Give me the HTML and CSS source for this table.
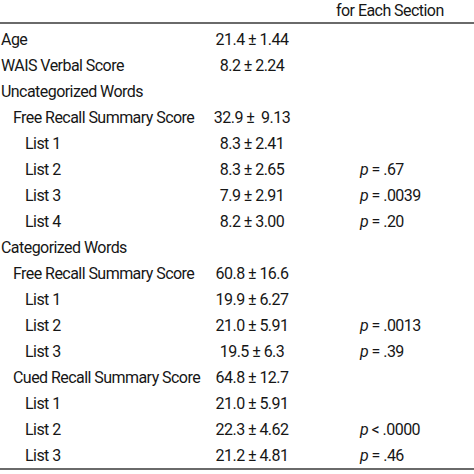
FILE: index.html
```html
<!DOCTYPE html>
<html>
<head>
<meta charset="utf-8">
<link rel="stylesheet" href="styles.css">
</head>
<body>
<div class="table">
  <div class="head">
    <span class="c-label"></span>
    <span class="c-val"></span>
    <span class="head-p">for Each Section</span>
  </div>
  <div class="body">
    <div class="row"><span class="c-label">Age</span><span class="c-val">21.4 ± 1.44</span><span class="c-p"></span></div>
    <div class="row"><span class="c-label">WAIS Verbal Score</span><span class="c-val">8.2 ± 2.24</span><span class="c-p"></span></div>
    <div class="row"><span class="c-label">Uncategorized Words</span><span class="c-val"></span><span class="c-p"></span></div>
    <div class="row"><span class="c-label l1">Free Recall Summary Score</span><span class="c-val">32.9 ±&nbsp; 9.13</span><span class="c-p"></span></div>
    <div class="row"><span class="c-label l2">List 1</span><span class="c-val">8.3 ± 2.41</span><span class="c-p"></span></div>
    <div class="row"><span class="c-label l2">List 2</span><span class="c-val">8.3 ± 2.65</span><span class="c-p"><i>p</i> = .67</span></div>
    <div class="row"><span class="c-label l2">List 3</span><span class="c-val">7.9 ± 2.91</span><span class="c-p"><i>p</i> = .0039</span></div>
    <div class="row"><span class="c-label l2">List 4</span><span class="c-val">8.2 ± 3.00</span><span class="c-p"><i>p</i> = .20</span></div>
    <div class="row"><span class="c-label">Categorized Words</span><span class="c-val"></span><span class="c-p"></span></div>
    <div class="row"><span class="c-label l1">Free Recall Summary Score</span><span class="c-val">60.8 ± 16.6</span><span class="c-p"></span></div>
    <div class="row"><span class="c-label l2">List 1</span><span class="c-val">19.9 ± 6.27</span><span class="c-p"></span></div>
    <div class="row"><span class="c-label l2">List 2</span><span class="c-val">21.0 ± 5.91</span><span class="c-p"><i>p</i> = .0013</span></div>
    <div class="row"><span class="c-label l2">List 3</span><span class="c-val">19.5 ± 6.3</span><span class="c-p"><i>p</i> = .39</span></div>
    <div class="row"><span class="c-label l1">Cued Recall Summary Score</span><span class="c-val">64.8 ± 12.7</span><span class="c-p"></span></div>
    <div class="row"><span class="c-label l2">List 1</span><span class="c-val">21.0 ± 5.91</span><span class="c-p"></span></div>
    <div class="row"><span class="c-label l2">List 2</span><span class="c-val">22.3 ± 4.62</span><span class="c-p"><i>p</i> &lt; .0000</span></div>
    <div class="row"><span class="c-label l2">List 3</span><span class="c-val">21.2 ± 4.81</span><span class="c-p"><i>p</i> = .46</span></div>
  </div>
</div>
</body>
</html>
```

FILE: styles.css
```css
html, body {
  margin: 0;
  padding: 0;
  background: #fff;
}
body {
  font-family: "Roboto", "Liberation Sans", sans-serif;
  font-size: 16px;
  letter-spacing: -0.55px;
  color: #161616;
}
.table {
  width: 474px;
}
.head {
  display: grid;
  grid-template-columns: 200px 104px 170px;
  height: 22px;
  align-items: end;
  border-bottom: 2px solid #6a6a6a;
}
.head-p {
  margin-left: 32px;
  line-height: 18px;
  padding-bottom: 2px;
  white-space: nowrap;
}
.body {
  display: flex;
  flex-direction: column;
  padding-top: 2px;
  border-bottom: 2px solid #6a6a6a;
}
.row {
  display: grid;
  grid-template-columns: 200px 104px 170px;
  height: 26px;
  align-items: center;
}
.c-label {
  white-space: nowrap;
  padding-left: 1px;
}
.l1 { padding-left: 13px; }
.l2 { padding-left: 25px; }
.c-val {
  text-align: center;
  white-space: nowrap;
}
.c-p {
  padding-left: 56px;
  white-space: nowrap;
}
```
